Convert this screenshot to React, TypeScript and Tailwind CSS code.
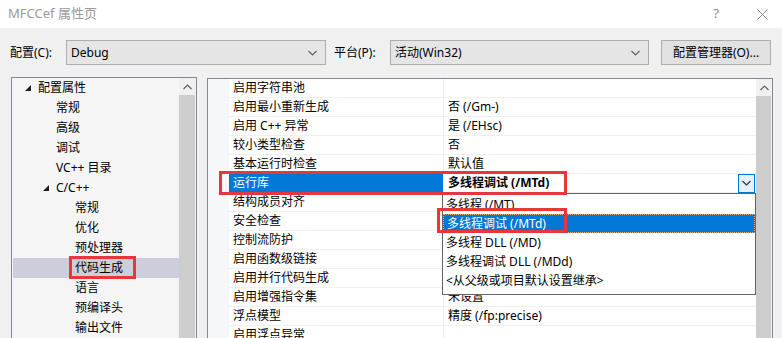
import React from "react";

const tree: { label: string; indent: number; arrow?: boolean; selected?: boolean }[] = [
  { label: "配置属性", indent: 0, arrow: true },
  { label: "常规", indent: 1 },
  { label: "高级", indent: 1 },
  { label: "调试", indent: 1 },
  { label: "VC++ 目录", indent: 1 },
  { label: "C/C++", indent: 1, arrow: true },
  { label: "常规", indent: 2 },
  { label: "优化", indent: 2 },
  { label: "预处理器", indent: 2 },
  { label: "代码生成", indent: 2, selected: true },
  { label: "语言", indent: 2 },
  { label: "预编译头", indent: 2 },
  { label: "输出文件", indent: 2 },
];

const props: { name: string; value: string; active?: boolean }[] = [
  { name: "启用字符串池", value: "" },
  { name: "启用最小重新生成", value: "否 (/Gm-)" },
  { name: "启用 C++ 异常", value: "是 (/EHsc)" },
  { name: "较小类型检查", value: "否" },
  { name: "基本运行时检查", value: "默认值" },
  { name: "运行库", value: "多线程调试 (/MTd)", active: true },
  { name: "结构成员对齐", value: "" },
  { name: "安全检查", value: "" },
  { name: "控制流防护", value: "" },
  { name: "启用函数级链接", value: "" },
  { name: "启用并行代码生成", value: "" },
  { name: "启用增强指令集", value: "未设置" },
  { name: "浮点模型", value: "精度 (/fp:precise)" },
  { name: "启用浮点异常", value: "" },
];

const options = ["多线程 (/MT)", "多线程调试 (/MTd)", "多线程 DLL (/MD)", "多线程调试 DLL (/MDd)", "<从父级或项目默认设置继承>"];

function Chevron({ up, className }: { up?: boolean; className?: string }) {
  return (
    <svg className={className} width="9" height="6" viewBox="0 0 9 6" fill="none">
      <path d={up ? "M0.5 5 L4.5 1 L8.5 5" : "M0.5 1 L4.5 5 L8.5 1"} stroke="currentColor" strokeWidth="1.2" />
    </svg>
  );
}

function Triangle() {
  return (
    <svg width="6" height="6" viewBox="0 0 6 6">
      <path d="M6 0 L6 6 L0 6 Z" fill="#1e1e1e" />
    </svg>
  );
}

function Combo({ text, width }: { text: string; width: string }) {
  return (
    <div className={`${width} h-[25px] bg-[#e5e5e5] border border-[#adadad] flex items-center justify-between pl-[4px] pr-[8px]`}>
      <span>{text}</span>
      <Chevron className="text-[#606060]" />
    </div>
  );
}

function ScrollBar({ width }: { width: string }) {
  return (
    <div className={`${width} bg-[#f0f0f0] flex flex-col`}>
      <div className="h-[17px] flex items-center justify-center text-[#606060]">
        <Chevron up />
      </div>
      <div className="flex-1 bg-[#cdcdcd] mr-px" />
    </div>
  );
}

export default function App() {
  return (
    <div className="relative w-[782px] h-[338px] overflow-hidden bg-[#f0f0f0] text-[12px] text-black font-['Noto_Sans','Noto_Sans_CJK_SC',sans-serif]">
      {/* title bar */}
      <div className="h-[28px] bg-white flex items-center pl-[8px] pr-[14px]">
        <span className="text-[13px] text-[#9a9a9a] flex-1">MFCCef 属性页</span>
        <span className="text-[13px] text-[#8a8a8a] mr-[38px]">?</span>
        <svg width="11" height="11" viewBox="0 0 11 11">
          <path d="M0.5 0.5 L10.5 10.5 M10.5 0.5 L0.5 10.5" stroke="#8a8a8a" strokeWidth="1" />
        </svg>
      </div>

      {/* config row */}
      <div className="flex items-center mt-[12px] pl-[10px] h-[25px]">
        <span className="w-[56px]">配置(C):</span>
        <Combo text="Debug" width="w-[260px]" />
        <span className="ml-[8px] w-[56px]">平台(P):</span>
        <Combo text="活动(Win32)" width="w-[259px]" />
        <div className="ml-[12px] w-[110px] h-[25px] bg-[#e1e1e1] border border-[#adadad] flex items-center justify-center">
          配置管理器(O)...
        </div>
      </div>

      {/* main */}
      <div className="flex mt-[12px] pl-[11px] gap-[10px] h-[300px]">
        {/* tree */}
        <div className="w-[186px] border border-[#828790] flex">
          <div className="flex-1 bg-[#f5f5f5] flex flex-col">
            {tree.map((t, i) => (
              <div
                key={i}
                className={`h-[20px] flex items-center ml-px ${t.selected ? "bg-[#cccedb]" : ""} ${
                  t.indent === 0 ? "pl-[12px]" : t.indent === 1 ? (t.arrow ? "pl-[30px]" : "pl-[43px]") : "pl-[62px]"
                }`}
              >
                {t.arrow && (
                  <span className="w-[13px] flex items-center">
                    <Triangle />
                  </span>
                )}
                <span>{t.label}</span>
              </div>
            ))}
          </div>
          <ScrollBar width="w-[17px]" />
        </div>

        {/* property grid */}
        <div className="w-[566px] mt-px border border-[#828790] flex">
          <div className="flex-1 bg-white flex flex-col">
            {props.map((p, i) => (
              <div key={i} className="h-[19px] flex">
                <div className="w-[21px] bg-[#f5f7fb]" />
                <div
                  className={`w-[214px] pl-[4px] flex items-center border-b ${
                    p.active ? "bg-[#0078d7] text-white border-[#0078d7]" : "border-[#f0f0f0]"
                  }`}
                >
                  {p.name}
                </div>
                <div className="flex-1 pl-[4px] flex items-center justify-between border-l border-b border-[#f0f0f0]">
                  <span className={p.active ? "font-bold" : ""}>{p.value}</span>
                  {p.active && (
                    <div className="w-[17px] h-[19px] mr-px border border-[#0078d7] bg-[#e5f1fb] flex items-center justify-center text-[#333]">
                      <Chevron />
                    </div>
                  )}
                </div>
              </div>
            ))}
          </div>
          <ScrollBar width="w-[16px]" />
        </div>
      </div>

      {/* open dropdown */}
      <div className="absolute left-[442px] top-[193px] w-[314px] h-[102px] bg-white border border-[#646464] pt-px">
        {options.map((o, i) => (
          <div
            key={i}
            className={`h-[19px] flex items-center pl-[3px] ${
              i === 1 ? "bg-[#0078d7] text-white border border-dotted border-[#e8b070]" : ""
            }`}
          >
            {o}
          </div>
        ))}
      </div>

      {/* red annotation boxes */}
      <div className="absolute left-[69px] top-[256px] w-[67px] h-[23px] border-[3px] border-[#e8373c]" />
      <div className="absolute left-[219px] top-[171px] w-[348px] h-[24px] border-[3px] border-[#e8373c]" />
      <div className="absolute left-[437px] top-[208px] w-[130px] h-[25px] border-[3px] border-[#e8373c]" />
    </div>
  );
}
